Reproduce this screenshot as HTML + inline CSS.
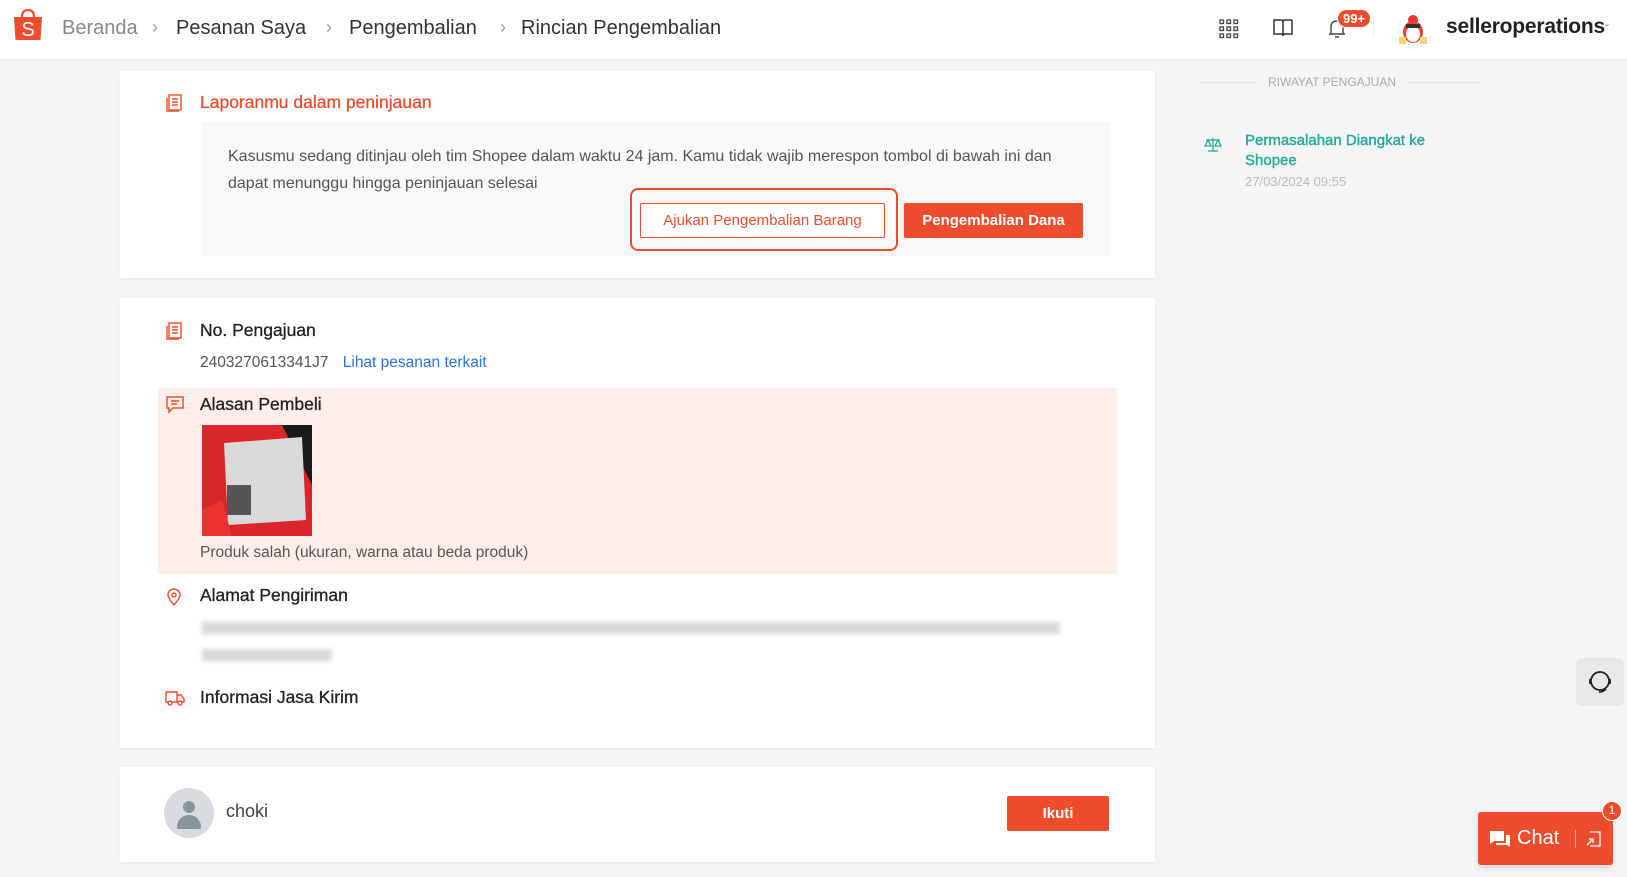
<!DOCTYPE html>
<html><head><meta charset="utf-8"><style>
*{box-sizing:border-box;margin:0;padding:0}
body{width:1627px;height:877px;overflow:hidden;background:#f5f5f8;font-family:"Liberation Sans",Arial,sans-serif;color:#222;position:relative}
.a{position:absolute}
.hdr{left:0;top:0;width:1627px;height:59px;background:#fff;box-shadow:0 1px 3px rgba(0,0,0,.08)}
.card{background:#fff;left:120px;width:1035px;box-shadow:0 1px 2px rgba(0,0,0,.05)}
.t{white-space:nowrap}
.h{font-size:17.5px;color:#222;-webkit-text-stroke:.3px #222}
</style></head><body>
<div class="a hdr">
 <svg class="a" style="left:13px;top:9px" width="30" height="32" viewBox="0 0 30 32"><path d="M9 8 Q9 1 15 1 Q21 1 21 8" fill="none" stroke="#ee4d2d" stroke-width="2.2"/><path d="M1 8 H29 L27.5 31 H2.5 Z" fill="#ee4d2d"/><text x="15" y="27" font-size="20" fill="#fff" text-anchor="middle" font-family="Liberation Sans">S</text></svg>
 <div class="a t" style="left:62px;top:17px;font-size:20px;color:#888">Beranda</div>
 <div class="a t" style="left:152px;top:17px;font-size:18px;color:#999">›</div>
 <div class="a t" style="left:176px;top:17px;font-size:20px;color:#333">Pesanan Saya</div>
 <div class="a t" style="left:326px;top:17px;font-size:18px;color:#999">›</div>
 <div class="a t" style="left:349px;top:17px;font-size:20px;color:#333">Pengembalian</div>
 <div class="a t" style="left:500px;top:17px;font-size:18px;color:#999">›</div>
 <div class="a t" style="left:521px;top:17px;font-size:20px;color:#333">Rincian Pengembalian</div>
 <svg class="a" style="left:1219px;top:19px" width="20" height="20" viewBox="0 0 20 20" fill="none" stroke="#444" stroke-width="1.3"><rect x="1" y="1" width="3.5" height="3.5"/><rect x="8" y="1" width="3.5" height="3.5"/><rect x="15" y="1" width="3.5" height="3.5"/><rect x="1" y="8" width="3.5" height="3.5"/><rect x="8" y="8" width="3.5" height="3.5"/><rect x="15" y="8" width="3.5" height="3.5"/><rect x="1" y="15" width="3.5" height="3.5"/><rect x="8" y="15" width="3.5" height="3.5"/><rect x="15" y="15" width="3.5" height="3.5"/></svg>
 <svg class="a" style="left:1273px;top:18px" width="20" height="20" viewBox="0 0 20 20" fill="none" stroke="#333" stroke-width="1.5"><path d="M1 2 H8 Q10 2 10 4 V18 Q10 16 8 16 H1 Z M19 2 H12 Q10 2 10 4 M19 2 V16 H12 Q10 16 10 18"/></svg>
 <svg class="a" style="left:1327px;top:18px" width="20" height="22" viewBox="0 0 20 22" fill="none" stroke="#444" stroke-width="1.4"><path d="M4 16 V9 Q4 3 10 3 Q16 3 16 9 V16 H18 H2 Z M8 19 H12"/></svg>
 <div class="a t" style="left:1337px;top:9px;background:#ee4d2d;color:#fff;font-size:13px;font-weight:bold;padding:1px 5px;border-radius:10px;border:1.5px solid #fff">99+</div>
 <div class="a" style="left:1373px;top:16px;width:1px;height:20px;background:#eee"></div>
 <svg class="a" style="left:1396px;top:11px" width="34" height="36" viewBox="0 0 34 36"><circle cx="17" cy="9" r="5" fill="#e33"/><ellipse cx="17" cy="21" rx="10" ry="11" fill="#e43"/><ellipse cx="17" cy="23" rx="7" ry="8" fill="#fff"/><rect x="10" y="13" width="14" height="4" fill="#333"/><rect x="3" y="26" width="7" height="7" fill="#f5d37a"/><rect x="24" y="26" width="7" height="7" fill="#f5d37a"/></svg>
 <div class="a t" style="left:1446px;top:15px;font-size:21px;color:#222;font-weight:bold;letter-spacing:-.2px">selleroperations<span style="font-size:12px;color:#888;font-weight:normal">ˇ</span></div>
</div>

<div class="a card" style="top:71px;height:207px">
 <svg class="a" style="left:46px;top:23px" width="16" height="18" viewBox="0 0 16 18" fill="none" stroke="#ee4d2d" stroke-width="1.4"><rect x="3" y="1" width="12" height="15"/><path d="M1 4 V17 H13 M6 5 H12 M6 8 H12 M6 11 H12"/></svg>
 <div class="a t" style="left:80px;top:21px;font-size:17.5px;color:#ee4d2d;-webkit-text-stroke:.3px #ee4d2d">Laporanmu dalam peninjauan</div>
 <div class="a" style="left:82px;top:51px;width:908px;height:134px;background:#f8f8f8"></div>
 <div class="a t" style="left:108px;top:72px;font-size:16px;color:#555;line-height:27px">Kasusmu sedang ditinjau oleh tim Shopee dalam waktu 24 jam. Kamu tidak wajib merespon tombol di bawah ini dan<br>dapat menunggu hingga peninjauan selesai</div>
 <div class="a" style="left:510px;top:117px;width:268px;height:63px;border:2.5px solid #ee4d2d;border-radius:8px"></div>
 <div class="a t" style="left:520px;top:132px;width:245px;height:35px;border:1px solid #ee4d2d;border-radius:2px;background:#fff;color:#ee4d2d;font-size:15px;text-align:center;line-height:33px">Ajukan Pengembalian Barang</div>
 <div class="a t" style="left:784px;top:132px;width:179px;height:35px;background:#ee4d2d;border-radius:2px;color:#fff;font-size:15px;font-weight:bold;text-align:center;line-height:35px">Pengembalian Dana</div>
</div>

<div class="a card" style="top:298px;height:450px">
 <svg class="a" style="left:46px;top:24px" width="16" height="18" viewBox="0 0 16 18" fill="none" stroke="#ee4d2d" stroke-width="1.4"><rect x="3" y="1" width="12" height="15"/><path d="M1 4 V17 H13 M6 5 H12 M6 8 H12 M6 11 H12"/></svg>
 <div class="a t h" style="left:80px;top:22px">No. Pengajuan</div>
 <div class="a t" style="left:80px;top:56px;font-size:15.5px;color:#555">2403270613341J7 <span style="color:#2673dd;margin-left:10px">Lihat pesanan terkait</span></div>
 <div class="a" style="left:38px;top:90px;width:959px;height:186px;background:#fdeeea"></div>
 <svg class="a" style="left:45px;top:98px" width="20" height="18" viewBox="0 0 20 18" fill="none" stroke="#ee4d2d" stroke-width="1.4"><path d="M2 1 H18 V12 H8 L4 16 V12 H2 Z M6 5 H14 M6 8 H12"/></svg>
 <div class="a t h" style="left:80px;top:96px">Alasan Pembeli</div>
 <svg class="a" style="left:82px;top:127px" width="110" height="111" viewBox="0 0 110 111"><rect width="110" height="111" fill="#222"/><path d="M0 0 H110 V111 H0 Z" fill="#d8262b"/><path d="M80 0 H110 V60 Z" fill="#1a1a1a"/><path d="M22 18 L100 12 L104 95 L26 100 Z" fill="#d9d9d9"/><rect x="25" y="60" width="24" height="30" fill="#555"/><path d="M0 85 L20 75 L30 111 H0 Z" fill="#e33"/></svg>
 <div class="a t" style="left:80px;top:246px;font-size:15.5px;color:#555">Produk salah (ukuran, warna atau beda produk)</div>
 <svg class="a" style="left:47px;top:290px" width="14" height="18" viewBox="0 0 14 18" fill="none" stroke="#ee4d2d" stroke-width="1.4"><path d="M7 17 Q1 10 1 7 A6 6 0 0 1 13 7 Q13 10 7 17 Z"/><circle cx="7" cy="7" r="2"/></svg>
 <div class="a t h" style="left:80px;top:287px">Alamat Pengiriman</div>
 <div class="a" style="left:82px;top:324px;width:858px;height:12px;background:#d8d8d8;filter:blur(2px)"></div>
 <div class="a" style="left:82px;top:351px;width:130px;height:12px;background:#d8d8d8;filter:blur(2px)"></div>
 <svg class="a" style="left:45px;top:392px" width="20" height="16" viewBox="0 0 20 16" fill="none" stroke="#ee4d2d" stroke-width="1.4"><path d="M1 2 H12 V12 H1 Z M12 5 H16 L19 9 V12 H12"/><circle cx="5" cy="13" r="2" fill="#fff"/><circle cx="15" cy="13" r="2" fill="#fff"/></svg>
 <div class="a t h" style="left:80px;top:389px">Informasi Jasa Kirim</div>
</div>

<div class="a card" style="top:767px;height:95px">
 <div class="a" style="left:44px;top:21px;width:50px;height:50px;border-radius:50%;background:#d8dce1;overflow:hidden"><div class="a" style="left:19px;top:13px;width:12px;height:12px;border-radius:50%;background:#8a939c"></div><div class="a" style="left:13px;top:27px;width:24px;height:14px;border-radius:12px 12px 2px 2px;background:#8a939c"></div></div>
 <div class="a t" style="left:106px;top:34px;font-size:18px;color:#444">choki</div>
 <div class="a t" style="left:887px;top:29px;width:102px;height:35px;background:#ee4d2d;border-radius:2px;color:#fff;font-size:15px;font-weight:bold;text-align:center;line-height:35px">Ikuti</div>
</div>

<div class="a" style="left:1200px;top:82px;width:281px;height:1px;background:#e3e3e3"></div>
<div class="a t" style="left:1258px;top:75px;padding:0 10px;background:#f5f5f8;font-size:12px;color:#aaa">RIWAYAT PENGAJUAN</div>
<svg class="a" style="left:1204px;top:137px" width="18" height="16" viewBox="0 0 18 16" fill="none" stroke="#26aa99" stroke-width="1.3"><path d="M9 1 V14 M4 14 H14 M2 3 H16 M4 3 L1 9 H7 Z M14 3 L11 9 H17 Z"/></svg>
<div class="a" style="left:1245px;top:131px;font-size:15px;color:#26aa99;line-height:20px;-webkit-text-stroke:.4px #26aa99">Permasalahan Diangkat ke<br>Shopee</div>
<div class="a t" style="left:1245px;top:174px;font-size:13px;color:#bbb">27/03/2024 09:55</div>

<div class="a" style="left:1576px;top:658px;width:48px;height:48px;background:#e8e8ea;border-radius:6px"></div>
<svg class="a" style="left:1586px;top:668px" width="28" height="28" viewBox="0 0 28 28" fill="none" stroke="#222" stroke-width="1.8"><circle cx="14" cy="13" r="9"/><path d="M4 11 V16 M24 11 V16 M20 21 Q17 24 13 24"/></svg>
<div class="a" style="left:1478px;top:812px;width:135px;height:53px;background:#ee4d2d;border-radius:3px;box-shadow:0 2px 6px rgba(0,0,0,.15)"></div>
<svg class="a" style="left:1489px;top:830px" width="22" height="18" viewBox="0 0 22 18" fill="#fff"><path d="M1 1 H15 V11 H5 L1 14 Z"/><path d="M17 5 H21 V17 L18 15 H7 V13 H17 Z"/></svg>
<div class="a t" style="left:1517px;top:827px;font-size:20px;color:#fff">Chat</div>
<div class="a" style="left:1575px;top:830px;width:1px;height:18px;background:rgba(255,255,255,.5)"></div>
<svg class="a" style="left:1585px;top:831px" width="16" height="16" viewBox="0 0 16 16" fill="none" stroke="#fff" stroke-width="1.3"><path d="M5 1 H15 V15 H5 M2 14 L8 8 M4 8 H8 V12"/></svg>
<div class="a t" style="left:1602px;top:801px;width:20px;height:20px;border-radius:50%;background:#ee4d2d;border:1.5px solid #fff;color:#fff;font-size:12px;text-align:center;line-height:17px">1</div>
</body></html>
